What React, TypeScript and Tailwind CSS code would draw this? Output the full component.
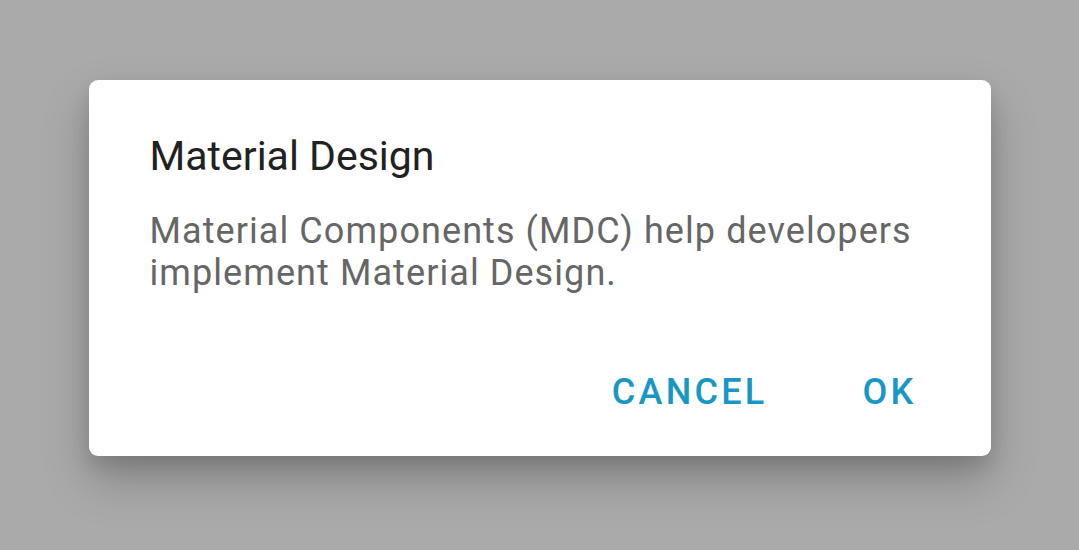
export default function App() {
  return (
    <div className="w-full h-[550px] bg-[#aaaaaa] flex justify-center items-start pt-[80px] font-['Roboto',sans-serif]">
      <div className="w-[902px] h-[376px] bg-white rounded-[9px] shadow-[0_24px_48px_rgba(0,0,0,0.22),0_10px_20px_rgba(0,0,0,0.12)] pl-[61px] pr-[60px]">
        <h2 className="pt-[52px] text-[41px] leading-[48px] text-[#212121] font-normal">Material Design</h2>
        <p className="mt-[30px] text-[36px] leading-[42px] tracking-[0.03em] text-[#666666]">
          Material Components (MDC) help developers implement Material Design.
        </p>
        <div className="mt-[78px] flex justify-end gap-[95px] pr-[14px]">
          <button className="text-[36px] leading-[40px] font-medium tracking-[0.09em] text-[#1797c4] uppercase">Cancel</button>
          <button className="text-[36px] leading-[40px] font-medium tracking-[0.09em] text-[#1797c4] uppercase">OK</button>
        </div>
      </div>
    </div>
  );
}
